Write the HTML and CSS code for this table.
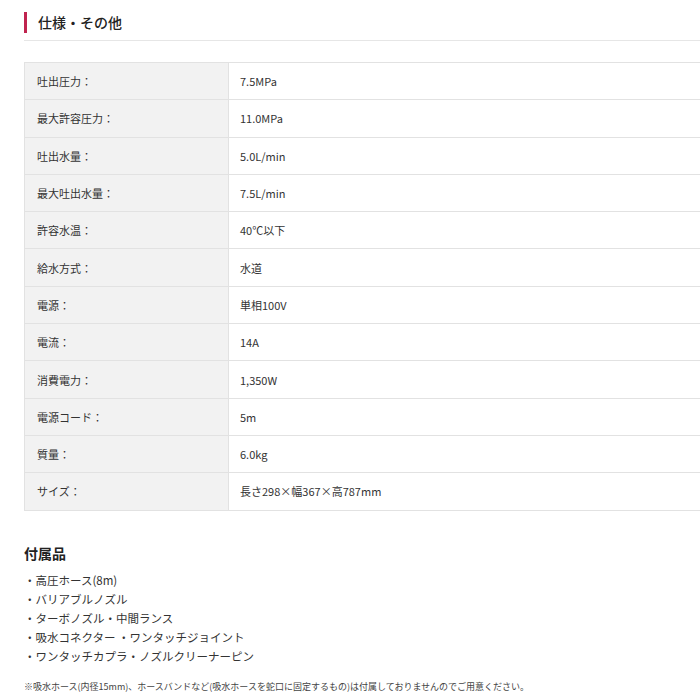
FILE: index.html
```html
<!DOCTYPE html>
<html lang="ja">
<head>
    <meta charset="UTF-8">
    <title>仕様・その他</title>
    <link rel="stylesheet" href="styles.css">
</head>
<body>
    <div class="container">
        <h2 class="section-title"><span>仕様・その他</span></h2>

        <table class="spec-table">
            <tr><th>吐出圧力：</th><td>7.5MPa</td></tr>
            <tr><th>最大許容圧力：</th><td>11.0MPa</td></tr>
            <tr><th>吐出水量：</th><td>5.0L/min</td></tr>
            <tr><th>最大吐出水量：</th><td>7.5L/min</td></tr>
            <tr><th>許容水温：</th><td>40℃以下</td></tr>
            <tr><th>給水方式：</th><td>水道</td></tr>
            <tr><th>電源：</th><td>単相100V</td></tr>
            <tr><th>電流：</th><td>14A</td></tr>
            <tr><th>消費電力：</th><td>1,350W</td></tr>
            <tr><th>電源コード：</th><td>5m</td></tr>
            <tr><th>質量：</th><td>6.0kg</td></tr>
            <tr><th>サイズ：</th><td>長さ298×幅367×高787mm</td></tr>
        </table>

        <h3 class="sub-title">付属品</h3>
        <ul class="accessories">
            <li>・高圧ホース(8m)</li>
            <li>・バリアブルノズル</li>
            <li>・ターボノズル・中間ランス</li>
            <li>・吸水コネクター ・ワンタッチジョイント</li>
            <li>・ワンタッチカプラ・ノズルクリーナーピン</li>
        </ul>
        <p class="note">※吸水ホース(内径15mm)、ホースバンドなど(吸水ホースを蛇口に固定するもの)は付属しておりませんのでご用意ください。</p>
    </div>
</body>
</html>
```

FILE: styles.css
```css
* {
    margin: 0;
    padding: 0;
    box-sizing: border-box;
}

body {
    font-family: "Noto Sans CJK JP", "Noto Sans", sans-serif;
    background: #fff;
    color: #333;
    overflow: hidden;
}

.container {
    width: 720px;
    padding: 12px 0 0 24px;
}

/* heading with red accent + thin rule */
.section-title {
    font-size: 14px;
    font-weight: 500;
    color: #222;
    padding-bottom: 7px;
    border-bottom: 1px solid #e6e6e6;
}

.section-title span {
    display: block;
    line-height: 21px;
    padding-left: 11px;
    border-left: 3px solid #c0244f;
}

.spec-table {
    width: 100%;
    margin-top: 21px;
    border-collapse: collapse;
    border-top: 1px solid #e2e2e2;
}

.spec-table th,
.spec-table td {
    height: 37.3px;
    font-size: 11px;
    font-weight: 400;
    text-align: left;
    vertical-align: middle;
    border-bottom: 1px solid #e2e2e2;
    color: #333;
}

.spec-table th {
    width: 204px;
    padding-left: 12px;
    background: #f2f2f2;
    border-left: 1px solid #e2e2e2;
    border-right: 1px solid #e2e2e2;
}

.spec-table td {
    padding-left: 11px;
}

.sub-title {
    font-size: 14px;
    font-weight: 700;
    line-height: 20px;
    margin-top: 32px;
    color: #222;
}

.accessories {
    list-style: none;
    margin-top: 8px;
}

.accessories li {
    font-size: 11.5px;
    line-height: 19px;
}

.note {
    font-size: 9px;
    margin-top: 14px;
    color: #444;
}
```
